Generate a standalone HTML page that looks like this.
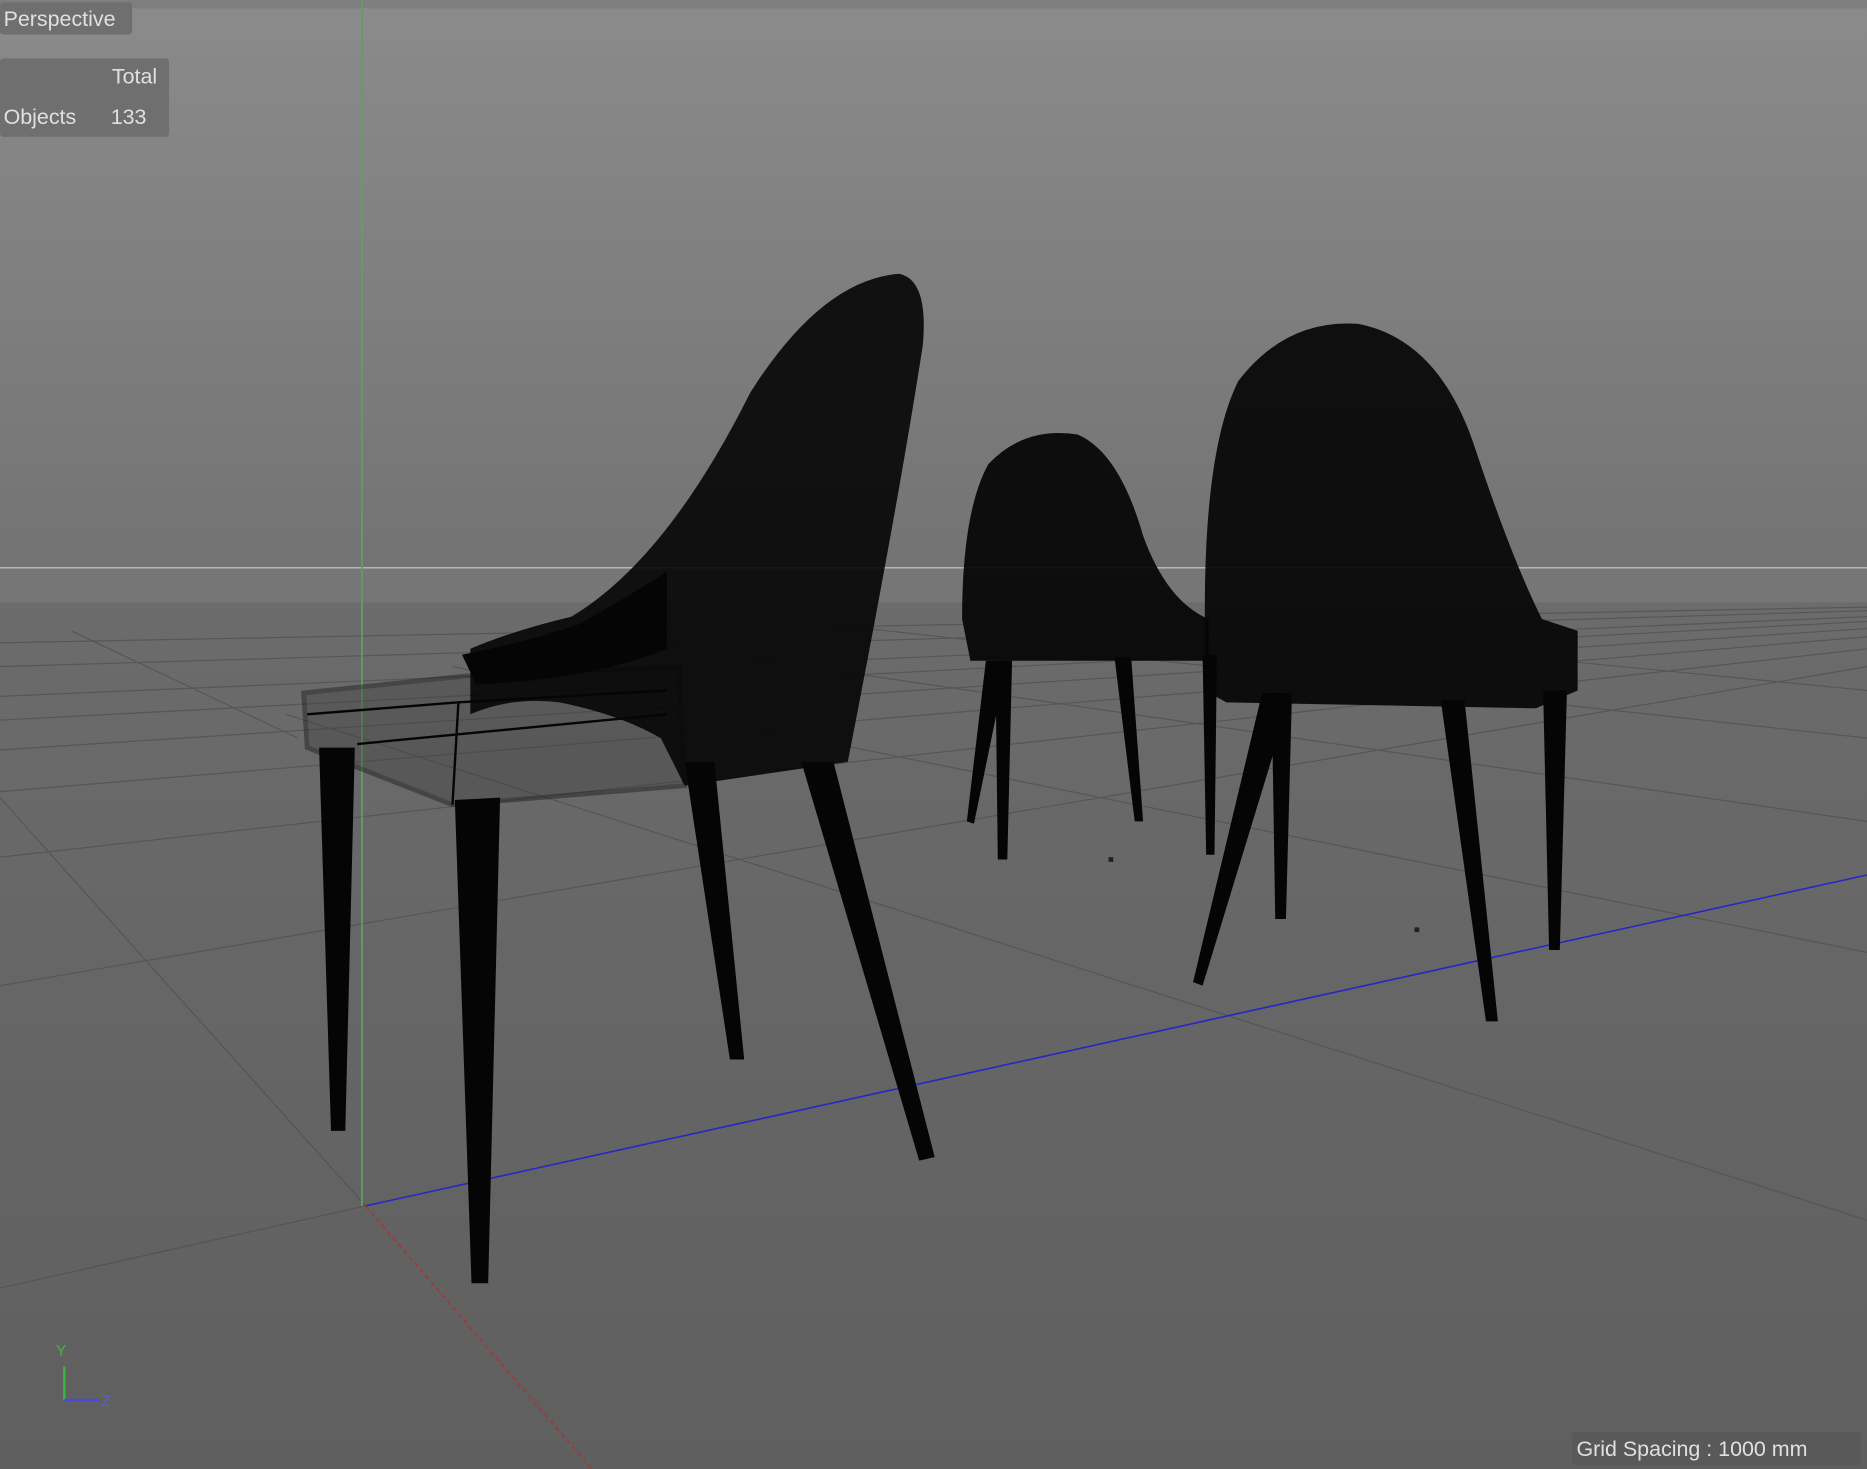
<!DOCTYPE html>
<html><head><meta charset="utf-8"><style>
html,body{margin:0;padding:0;width:1867px;height:1469px;overflow:hidden;background:#777}
svg{display:block}
</style></head><body>
<svg width="1867" height="1469" viewBox="0 0 1568 1234" preserveAspectRatio="none" xmlns="http://www.w3.org/2000/svg">
<defs>
<linearGradient id="sky" x1="0" y1="0" x2="0" y2="1">
<stop offset="0" stop-color="#8b8b8b"/><stop offset="1" stop-color="#737373"/></linearGradient>
<linearGradient id="floor" x1="0" y1="0" x2="0" y2="1">
<stop offset="0" stop-color="#6c6c6c"/><stop offset="1" stop-color="#5f5f5f"/></linearGradient>
</defs>
<rect x="0" y="0" width="1568" height="478" fill="url(#sky)"/>
<rect x="0" y="0" width="1568" height="7" fill="#7e7e7e"/>
<rect x="0" y="478" width="1568" height="756" fill="url(#floor)"/>
<rect x="0" y="478" width="1568" height="28" fill="#767676"/>
<line x1="0" y1="477" x2="1568" y2="477" stroke="#bdbdbd" stroke-width="1.2"/>
<g stroke="#4e4e4e" stroke-width="1" fill="none" opacity="0.7">
<line x1="0" y1="1082" x2="307" y2="1013"/>
<line x1="0" y1="828" x2="1568" y2="560"/>
<line x1="0" y1="720" x2="1568" y2="545"/>
<line x1="0" y1="665" x2="1568" y2="535"/>
<line x1="0" y1="630" x2="1568" y2="528"/>
<line x1="0" y1="605" x2="1568" y2="522"/>
<line x1="0" y1="585" x2="1568" y2="518"/>
<line x1="0" y1="560" x2="1568" y2="513"/>
<line x1="0" y1="540" x2="1568" y2="510"/>
<line x1="0" y1="670" x2="307" y2="1013"/>
<line x1="240" y1="600" x2="1568" y2="1025"/>
<line x1="380" y1="560" x2="1568" y2="800"/>
<line x1="540" y1="540" x2="1568" y2="690"/>
<line x1="700" y1="525" x2="1568" y2="620"/>
<line x1="60" y1="530" x2="250" y2="620"/>
<line x1="900" y1="515" x2="1568" y2="580"/>
</g>
<line x1="304" y1="0" x2="304" y2="1013" stroke="#5fa05f" stroke-width="1.5"/>
<line x1="307" y1="1013" x2="1568" y2="735" stroke="#2626c8" stroke-width="1.3"/>
<line x1="307" y1="1013" x2="497" y2="1234" stroke="#b03030" stroke-width="1.2" stroke-dasharray="4 3"/>
<g fill="#050505">
<!-- chair 1 seat (wireframe-ish) -->
<path d="M255 582 L390 568 L570 560 L575 660 L380 676 L258 628 Z" fill="#3a3a3a" opacity="0.35" stroke="#050505" stroke-width="4"/>
<path d="M258 600 L385 590 L560 580 M300 625 L560 600 M385 590 L380 676" stroke="#050505" stroke-width="2" fill="none"/>
<!-- chair 1 back -->
<path d="M395 545 Q430 530 480 518 Q560 470 630 330 Q690 235 755 230 Q780 235 775 290 Q755 420 712 640 L575 660 L555 620 Q520 600 470 590 Q430 585 395 600 Z" opacity="0.9"/>
<path d="M388 550 Q440 540 485 525 Q530 500 560 480 L560 545 Q500 570 400 575 Z"/>
<path d="M268 628 L298 628 L290 950 L278 950 Z"/>
<path d="M382 672 L420 670 L410 1078 L396 1078 Z"/>
<path d="M575 640 L600 640 L625 890 L613 890 Z"/>
<path d="M673 640 L700 640 L785 972 L772 975 Z"/>
<!-- chair 2 -->
<path d="M808 520 Q808 430 830 390 Q860 358 905 365 Q940 380 960 450 Q980 505 1015 520 L1015 555 L815 555 Z" opacity="0.93"/>
<path d="M828 555 L846 555 L818 692 L812 690 Z"/>
<path d="M836 555 L850 555 L846 722 L838 722 Z"/>
<path d="M936 552 L950 552 L960 690 L953 690 Z"/>
<path d="M1010 550 L1022 550 L1020 718 L1013 718 Z"/>
<!-- chair 3 -->
<path d="M1012 530 Q1010 380 1040 320 Q1080 268 1140 272 Q1210 285 1240 380 Q1270 470 1295 520 L1325 530 L1325 580 L1290 595 L1030 590 L1012 580 Z" opacity="0.92"/>
<path d="M1060 582 L1085 582 L1010 828 L1002 825 Z"/>
<path d="M1068 582 L1085 585 L1080 772 L1071 772 Z"/>
<path d="M1210 588 L1230 588 L1258 858 L1248 858 Z"/>
<path d="M1296 580 L1316 580 L1310 798 L1301 798 Z"/>
</g>
<rect x="931" y="720" width="4" height="4" fill="#222"/>
<rect x="1188" y="779" width="4" height="4" fill="#222"/>
<!-- HUD -->
<rect x="0" y="2" width="111" height="27" rx="3" fill="#6f6f6f"/>
<text x="3" y="22" font-family="Liberation Sans, sans-serif" font-size="18" fill="#e0e0e0">Perspective</text>
<rect x="0" y="49" width="142" height="66" rx="3" fill="#6f6f6f"/>
<text x="94" y="70" font-family="Liberation Sans, sans-serif" font-size="18" fill="#e0e0e0">Total</text>
<text x="3" y="104" font-family="Liberation Sans, sans-serif" font-size="18" fill="#e0e0e0">Objects</text>
<text x="93" y="104" font-family="Liberation Sans, sans-serif" font-size="18" fill="#e0e0e0">133</text>
<rect x="1320" y="1203" width="243" height="28" rx="3" fill="#595959"/>
<text x="1324" y="1223" font-family="Liberation Sans, sans-serif" font-size="18" fill="#e0e0e0">Grid Spacing : 1000 mm</text>
<!-- gizmo -->
<line x1="54" y1="1148" x2="54" y2="1176" stroke="#3cb83c" stroke-width="2"/>
<line x1="54" y1="1176" x2="84" y2="1176" stroke="#4a4ad8" stroke-width="2"/>
<text x="47" y="1139" font-family="Liberation Sans, sans-serif" font-size="13" fill="#3cb83c">Y</text>
<text x="85" y="1181" font-family="Liberation Sans, sans-serif" font-size="13" fill="#5a5ae0">Z</text>
</svg>
</body></html>
